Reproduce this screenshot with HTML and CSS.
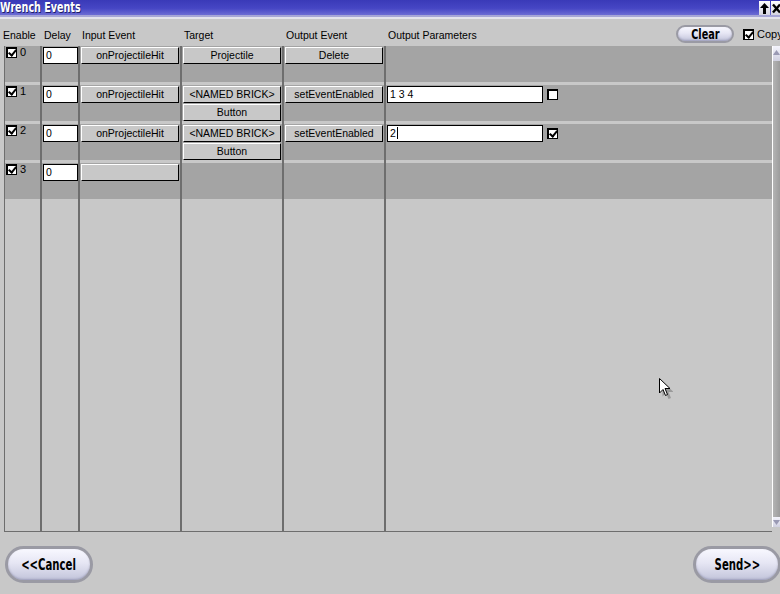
FILE: index.html
```html
<!DOCTYPE html>
<html lang="en">
<head>
    <meta charset="UTF-8">
    <title>Wrench Events</title>
    <link rel="stylesheet" href="styles.css">
</head>
<body>
    <!-- Title bar -->
    <div class="titlebar">
        <span class="title"><span class="cond">Wrench Events</span></span>
        <div class="title-buttons">
            <span class="tbtn">
                <svg width="9" height="11" viewBox="0 0 9 11"><path d="M4.5 0 L9 5 L6 5 L6 11 L3 11 L3 5 L0 5 Z" fill="#000"/></svg>
            </span>
            <span class="tbtn">
                <svg width="9" height="11" viewBox="0 0 9 11"><path d="M1 1.5 L8 9.5 M8 1.5 L1 9.5" stroke="#000" stroke-width="2.4"/></svg>
            </span>
        </div>
    </div>

    <!-- Column labels -->
    <div class="header">
        <div class="labels">
            <span>Enable</span>
            <span>Delay</span>
            <span>Input Event</span>
            <span>Target</span>
            <span>Output Event</span>
            <span>Output Parameters</span>
        </div>
        <span class="pill clear"><span class="cond">Clear</span></span>
        <span class="copy"><span class="check on"></span>Copy</span>
    </div>

    <!-- Event list -->
    <div class="main">
        <div class="list">
            <div class="row">
                <div class="cell"><span class="enable"><span class="check on"></span>0</span></div>
                <div class="cell"><span class="field delay">0</span></div>
                <div class="cell"><span class="btn">onProjectileHit</span></div>
                <div class="cell"><span class="btn">Projectile</span></div>
                <div class="cell"><span class="btn">Delete</span></div>
                <div class="cell params"></div>
            </div>
            <div class="row">
                <div class="cell"><span class="enable"><span class="check on"></span>1</span></div>
                <div class="cell"><span class="field delay">0</span></div>
                <div class="cell"><span class="btn">onProjectileHit</span></div>
                <div class="cell stack"><span class="btn">&lt;NAMED BRICK&gt;</span><span class="btn">Button</span></div>
                <div class="cell"><span class="btn">setEventEnabled</span></div>
                <div class="cell params"><span class="field param">1 3 4</span><span class="check"></span></div>
            </div>
            <div class="row">
                <div class="cell"><span class="enable"><span class="check on"></span>2</span></div>
                <div class="cell"><span class="field delay">0</span></div>
                <div class="cell"><span class="btn">onProjectileHit</span></div>
                <div class="cell stack"><span class="btn">&lt;NAMED BRICK&gt;</span><span class="btn">Button</span></div>
                <div class="cell"><span class="btn">setEventEnabled</span></div>
                <div class="cell params"><span class="field param">2<span class="caret"></span></span><span class="check on"></span></div>
            </div>
            <div class="row">
                <div class="cell"><span class="enable"><span class="check on"></span>3</span></div>
                <div class="cell"><span class="field delay">0</span></div>
                <div class="cell"><span class="btn"></span></div>
                <div class="cell"></div>
                <div class="cell"></div>
                <div class="cell params"></div>
            </div>
            <div class="row filler">
                <div class="cell"></div>
                <div class="cell"></div>
                <div class="cell"></div>
                <div class="cell"></div>
                <div class="cell"></div>
                <div class="cell params"></div>
            </div>
        </div>
        <div class="scrollbar">
            <span class="arrow"><svg width="7" height="5" viewBox="0 0 7 5"><path d="M3.5 0 L7 5 L0 5 Z" fill="#9a9ab4"/></svg></span>
            <span class="arrow"><svg width="7" height="5" viewBox="0 0 7 5"><path d="M0 0 L7 0 L3.5 5 Z" fill="#9a9ab4"/></svg></span>
        </div>
    </div>

    <!-- Bottom buttons -->
    <div class="footer">
        <span class="pill big"><span class="cond">&lt;&lt;Cancel</span></span>
        <span class="pill big send"><span class="cond">Send&gt;&gt;</span></span>
    </div>

    <!-- Mouse pointer -->
    <svg class="cursor" width="14" height="22" viewBox="0 0 14 22">
        <path d="M2 2 L2 17 L5.5 13.5 L8 19.5 L10.5 18.5 L8 12.5 L13 12.5 Z" fill="#444" opacity="0.35" transform="translate(1.5 1.5)"/>
        <path d="M0.5 0.5 L0.5 15 L4 11.5 L6.5 17.5 L8.5 16.5 L6 10.5 L11 10.5 Z" fill="#fff" stroke="#000" stroke-width="1"/>
    </svg>
</body>
</html>
```

FILE: styles.css
```css
* {
    box-sizing: border-box;
}
body {
    margin: 0;
    width: 780px;
    height: 594px;
    overflow: hidden;
    position: relative;
    background-color: #c8c8c8;
    color: #000;
    font-family: "Liberation Sans", Arial, sans-serif;
    font-size: 10.5px;
}
.cond {
    display: inline-block;
    white-space: nowrap;
    transform: scaleX(0.77);
}
.titlebar {
    height: 17px;
    display: flex;
    justify-content: space-between;
    background: linear-gradient(#3a3ab8, #4646c4 55%, #6c6cd4);
    border-bottom: 2px solid #a6a6d6;
}
.title {
    font-family: "DejaVu Sans Condensed", "Liberation Sans Narrow", sans-serif;
    font-weight: bold;
    font-size: 14px;
    line-height: 15px;
    color: #fff;
    text-shadow: 1px 1px 0 #1c1c66;
}
.title .cond {
    transform-origin: left center;
    transform: scaleX(0.76);
}
.title-buttons {
    display: flex;
    gap: 1px;
    padding-top: 1px;
    margin-right: -2px;
}
.tbtn {
    width: 11px;
    height: 14px;
    display: flex;
    align-items: center;
    justify-content: center;
    background: linear-gradient(#ffffff, #d4d4e0);
}
.header {
    height: 29px;
    border-top: 2px solid #e4e4ec;
    display: flex;
    align-items: flex-start;
    padding-left: 1px;
    white-space: nowrap;
}
.labels {
    flex-shrink: 0;
    width: 675px;
    display: grid;
    grid-template-columns: 41px 38px 102px 102px 102px 1fr;
    padding-top: 10px;
    line-height: 13px;
}
.labels span {
    padding-left: 2px;
}
.pill {
    flex-shrink: 0;
    display: flex;
    align-items: center;
    justify-content: center;
    border: 2px solid #9a9aa4;
    border-radius: 20px;
    background: linear-gradient(#f8f8ff 0%, #e6e6f4 45%, #c2c4da 100%);
    box-shadow: inset 0 -1px 2px rgba(90, 90, 130, 0.35);
    font-family: "DejaVu Sans Condensed", "Liberation Sans Narrow", sans-serif;
    font-weight: bold;
    color: #000;
}
.clear {
    width: 58px;
    height: 18px;
    margin-top: 6px;
    font-size: 14px;
    line-height: 14px;
}
.copy {
    display: flex;
    align-items: center;
    gap: 3px;
    margin-left: 9px;
    margin-top: 9px;
    font-size: 11px;
}
.check {
    position: relative;
    flex-shrink: 0;
    width: 11px;
    height: 11px;
    background-color: #fff;
    border: 1px solid #000;
    border-top-width: 2px;
    border-left-width: 2px;
}
.check.on::after {
    content: "";
    position: absolute;
    left: 2px;
    top: -1px;
    width: 3px;
    height: 6px;
    border-right: 2px solid #000;
    border-bottom: 2px solid #000;
    transform: rotate(40deg);
}
.main {
    height: 486px;
    display: flex;
}
.list {
    flex: 1;
    margin-left: 4px;
    border-left: 1px solid #6e6e6e;
    border-bottom: 1px solid #6e6e6e;
    display: flex;
    flex-direction: column;
}
.row {
    height: 39px;
    display: grid;
    grid-template-columns: 37px 38px 102px 102px 102px 1fr;
    background: linear-gradient(#a4a4a4 36px, #c8c8c8 36px);
}
.row.filler {
    flex: 1;
    background: none;
}
.cell {
    border-right: 2px solid #6e6e6e;
    padding: 1px 1px 0;
}
.enable {
    display: flex;
    align-items: center;
    height: 11px;
    gap: 3px;
    font-size: 11px;
    line-height: 11px;
}
.cell.stack {
    display: flex;
    flex-direction: column;
    gap: 1px;
}
.cell.params {
    border-right: none;
    display: flex;
    align-items: flex-start;
    gap: 4px;
}
.btn {
    display: block;
    height: 17px;
    background-color: #c8c8c8;
    border: 1px solid;
    border-color: #fff #000 #000 #fff;
    text-align: center;
    line-height: 15px;
}
.field {
    display: block;
    height: 17px;
    background-color: #fff;
    border: 1px solid #000;
    padding-left: 2px;
    line-height: 15px;
}
.field.delay {
    width: 35px;
}
.field.param {
    width: 156px;
}
.params .check {
    margin-top: 3px;
}
.caret {
    display: inline-block;
    width: 1px;
    height: 12px;
    margin-left: 1px;
    vertical-align: -2px;
    background-color: #000;
}
.scrollbar {
    width: 8px;
    height: 481px;
    display: flex;
    flex-direction: column;
    justify-content: space-between;
    border-left: 1px solid #fff;
    background: linear-gradient(to right, #b4b4b4, #9c9c9c);
}
.arrow {
    height: 15px;
    display: flex;
    align-items: flex-start;
    justify-content: center;
    padding-top: 4px;
    background: linear-gradient(#f4f4fc, #d0d0e0);
}
.arrow:last-child {
    height: 10px;
    padding-top: 3px;
}
.footer {
    display: flex;
    justify-content: space-between;
    padding: 14px 0 0 5px;
}
.big {
    width: 88px;
    height: 37px;
    border-width: 3px;
    font-size: 15px;
}
.big .cond {
    transform: scaleX(0.75);
}
.send {
    margin-right: -1px;
}
.cursor {
    position: absolute;
    left: 659px;
    top: 378px;
}
```
